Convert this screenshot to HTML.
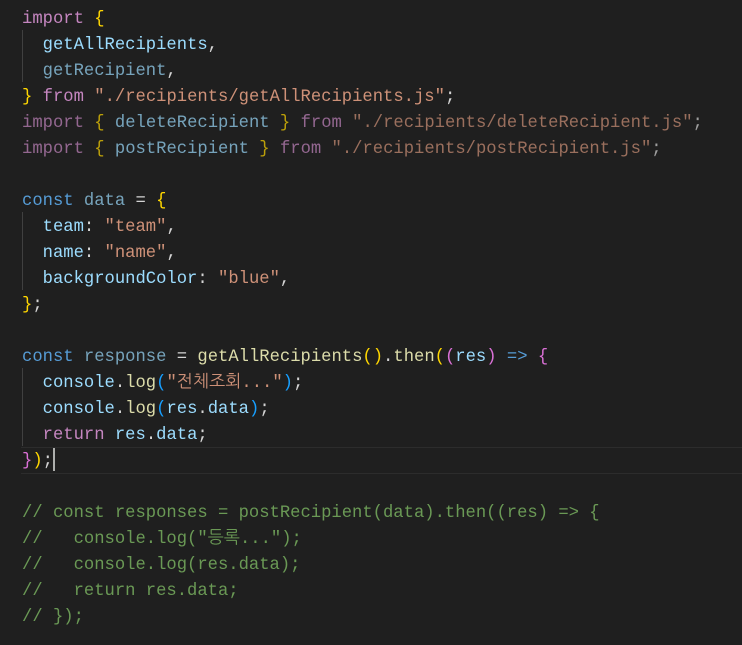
<!DOCTYPE html>
<html><head><meta charset="utf-8"><style>
body{margin:0;background:#1f1f1f;width:742px;height:645px;overflow:hidden;position:relative}
.code{position:absolute;left:22px;top:7px;font-family:"Liberation Mono","NanumGothic",monospace;font-size:17.2px;line-height:26px;color:#d4d4d4;white-space:pre}
.k{color:#c586c0}.v{color:#9cdcfe}.s{color:#ce9178}.c{color:#569cd6}.f{color:#dcdcaa}.m{color:#6a9955}
.y{color:#ffd700}.p{color:#da70d6}.b{color:#179fff}.d{opacity:.7}
.g{position:absolute;left:22px;width:1px;background:#404040}
.cur{position:absolute;left:21px;right:0;top:447px;height:25px;border-top:1px solid #2c2c2c;border-bottom:1px solid #2c2c2c}
.caret{position:absolute;left:53px;top:448px;width:2px;height:23px;background:#aeafad}
</style></head><body>
<div class="cur"></div>
<div class="g" style="top:30px;height:52px"></div>
<div class="g" style="top:212px;height:78px"></div>
<div class="g" style="top:368px;height:78px"></div>
<div class="caret"></div>
<div class="code"><span class="k">import</span> <span class="y">{</span>
  <span class="v">getAllRecipients</span>,
  <span class="v d">getRecipient</span>,
<span class="y">}</span> <span class="k">from</span> <span class="s">"./recipients/getAllRecipients.js"</span>;
<span class="d"><span class="k">import</span> <span class="y">{</span> <span class="v">deleteRecipient</span> <span class="y">}</span> <span class="k">from</span> <span class="s">"./recipients/deleteRecipient.js"</span>;</span>
<span class="d"><span class="k">import</span> <span class="y">{</span> <span class="v">postRecipient</span> <span class="y">}</span> <span class="k">from</span> <span class="s">"./recipients/postRecipient.js"</span>;</span>

<span class="c">const</span> <span class="v d">data</span> = <span class="y">{</span>
  <span class="v">team</span>: <span class="s">"team"</span>,
  <span class="v">name</span>: <span class="s">"name"</span>,
  <span class="v">backgroundColor</span>: <span class="s">"blue"</span>,
<span class="y">}</span>;

<span class="c">const</span> <span class="v d">response</span> = <span class="f">getAllRecipients</span><span class="y">()</span>.<span class="f">then</span><span class="y">(</span><span class="p">(</span><span class="v">res</span><span class="p">)</span> <span class="c">=&gt;</span> <span class="p">{</span>
  <span class="v">console</span>.<span class="f">log</span><span class="b">(</span><span class="s">"전체조회..."</span><span class="b">)</span>;
  <span class="v">console</span>.<span class="f">log</span><span class="b">(</span><span class="v">res</span>.<span class="v">data</span><span class="b">)</span>;
  <span class="k">return</span> <span class="v">res</span>.<span class="v">data</span>;
<span class="p">}</span><span class="y">)</span>;

<span class="m">// const responses = postRecipient(data).then((res) =&gt; {</span>
<span class="m">//   console.log("등록...");</span>
<span class="m">//   console.log(res.data);</span>
<span class="m">//   return res.data;</span>
<span class="m">// });</span></div>
</body></html>
